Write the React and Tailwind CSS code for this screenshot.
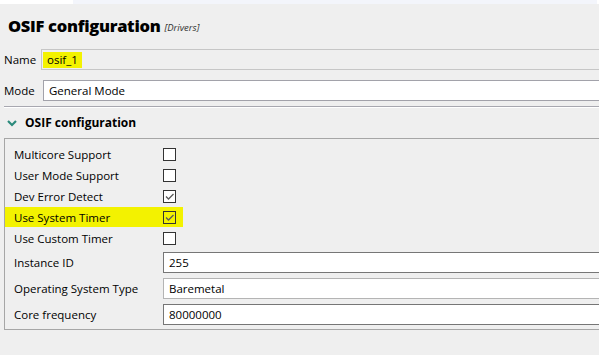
import React from 'react';

const FONT = "font-['Open_Sans','Noto_Sans',sans-serif]";

const Check = () => (
  <svg width="11" height="11" viewBox="0 0 11 11" className="block">
    <path d="M2 5.5 L4.5 8 L9.5 3" fill="none" stroke="#5a5a5a" strokeWidth="1.3" />
  </svg>
);

const CheckBox = ({ checked, highlight }) => (
  <div
    className={`w-[13px] h-[13px] border border-[#333333] flex items-center justify-center ${
      highlight ? 'bg-transparent' : 'bg-white'
    }`}
  >
    {checked && <Check />}
  </div>
);

const CheckRow = ({ label, checked, highlight }) => (
  <div className="relative h-[21px] flex items-center">
    {/* marker highlight behind the row */}
    {highlight && <div className="absolute left-0 top-[0px] w-[178px] h-[20px] bg-[#f3f200]" />}
    <span className="relative w-[149px] pl-[9px] box-content shrink-0">{label}</span>
    <div className="relative">
      <CheckBox checked={checked} highlight={highlight} />
    </div>
  </div>
);

const FieldRow = ({ label, value, light }) => (
  <div className="h-[26px] flex items-start pt-[3px]">
    <span className="w-[149px] pl-[9px] box-content shrink-0 leading-[21px]">{label}</span>
    <div
      className={`flex-1 h-[21px] -mr-[4px] bg-white border flex items-center px-[5px] ${
        light ? 'border-[#b4b4b4]' : 'border-[#767676]'
      }`}
    >
      {value}
    </div>
  </div>
);

export default function App() {
  return (
    <div className={`w-[599px] h-[355px] bg-[#efefef] overflow-hidden text-[11.5px] text-black ${FONT}`}>
      {/* top strip */}
      <div className="h-[4px] flex">
        <div className="w-[73px] bg-white" />
        <div className="flex-1 bg-[#f3f5fb]" />
        <div className="w-[2px] bg-white" />
      </div>

      {/* title */}
      <div className="h-[45px] flex items-center pl-[8px] pt-[1px] pb-[1px] gap-[4px]">
        <span className="text-[16.5px] font-extrabold tracking-[-0.3px]">OSIF configuration</span>
        <span className="text-[9.5px] italic text-[#333333] mt-[4px]">[Drivers]</span>
      </div>

      {/* name */}
      <div className="h-[21px] flex items-center">
        <span className="w-[41px] pl-[4px] shrink-0">Name</span>
        <div className="flex-1 h-[21px] -mr-[4px] border border-[#c6c6c6] bg-[#efefef] flex items-center pl-[1px]">
          <span className="bg-[#f3f200] h-[16px] leading-[16px] px-[4px]">osif_1</span>
        </div>
      </div>

      {/* mode */}
      <div className="h-[21px] mt-[10px] flex items-center">
        <span className="w-[43px] pl-[4px] shrink-0">Mode</span>
        <div className="flex-1 h-[21px] -mr-[4px] border border-[#a2a2aa] bg-white flex items-center px-[5px]">
          General Mode
        </div>
      </div>

      {/* separator */}
      <div className="mt-[5px] ml-[4px] border-t border-[#a8a8b0]" />
      <div className="ml-[4px] border-t border-white" />

      {/* section header */}
      <div className="h-[30px] flex items-center pl-[7px] gap-[8px]">
        <svg width="10" height="7" viewBox="0 0 10 7" className="block">
          <path d="M1 1 L5 5 L9 1" fill="none" stroke="#2b8a7c" strokeWidth="2.2" />
        </svg>
        <span className="font-bold text-[12px]">OSIF configuration</span>
      </div>

      {/* section box */}
      <div className="ml-[4px] -mr-[4px] border border-[#a6a6a6] pt-[5px] pb-[2px]">
        <CheckRow label="Multicore Support" />
        <CheckRow label="User Mode Support" />
        <CheckRow label="Dev Error Detect" checked />
        <CheckRow label="Use System Timer" checked highlight />
        <CheckRow label="Use Custom Timer" />
        <FieldRow label="Instance ID" value="255" />
        <FieldRow label="Operating System Type" value="Baremetal" light />
        <FieldRow label="Core frequency" value="80000000" />
      </div>
    </div>
  );
}
